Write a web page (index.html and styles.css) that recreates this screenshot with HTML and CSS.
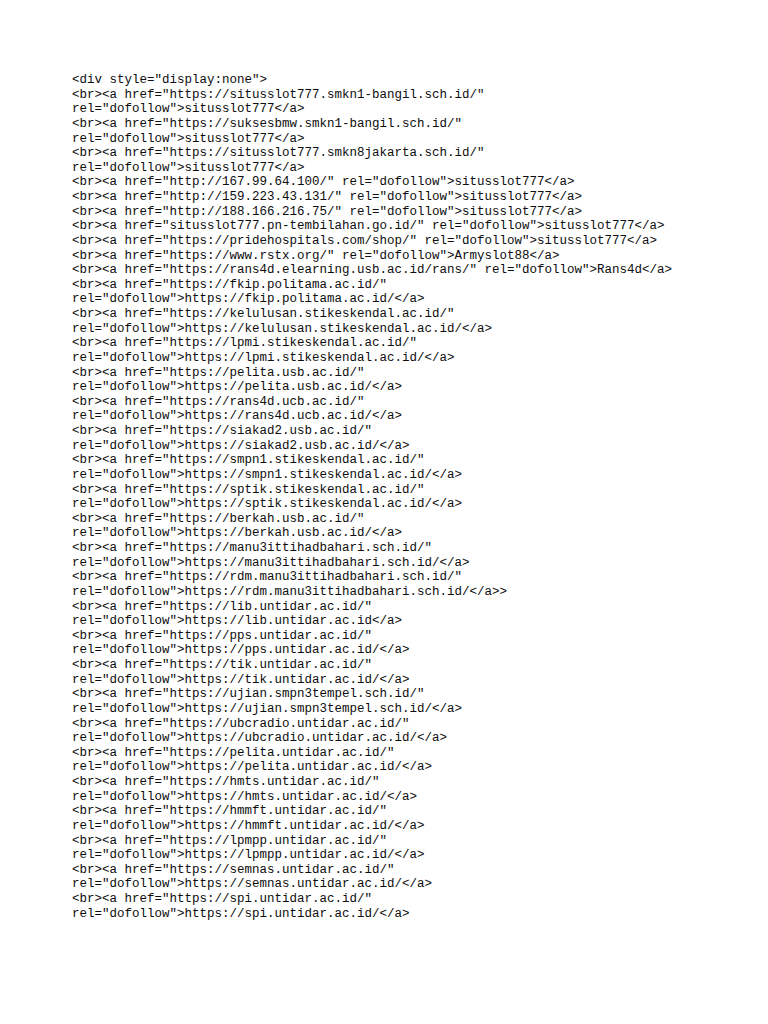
FILE: index.html
```html
<!DOCTYPE html>
<html lang="id">
<head>
<meta charset="utf-8">
<title>Document</title>
<link rel="stylesheet" href="styles.css">
</head>
<body>
<main class="page">
<pre class="source">&lt;div style="display:none"&gt;
&lt;br&gt;&lt;a href="https://situsslot777.smkn1-bangil.sch.id/"
rel="dofollow"&gt;situsslot777&lt;/a&gt;
&lt;br&gt;&lt;a href="https://suksesbmw.smkn1-bangil.sch.id/"
rel="dofollow"&gt;situsslot777&lt;/a&gt;
&lt;br&gt;&lt;a href="https://situsslot777.smkn8jakarta.sch.id/"
rel="dofollow"&gt;situsslot777&lt;/a&gt;
&lt;br&gt;&lt;a href="http://167.99.64.100/" rel="dofollow"&gt;situsslot777&lt;/a&gt;
&lt;br&gt;&lt;a href="http://159.223.43.131/" rel="dofollow"&gt;situsslot777&lt;/a&gt;
&lt;br&gt;&lt;a href="http://188.166.216.75/" rel="dofollow"&gt;situsslot777&lt;/a&gt;
&lt;br&gt;&lt;a href="situsslot777.pn-tembilahan.go.id/" rel="dofollow"&gt;situsslot777&lt;/a&gt;
&lt;br&gt;&lt;a href="https://pridehospitals.com/shop/" rel="dofollow"&gt;situsslot777&lt;/a&gt;
&lt;br&gt;&lt;a href="https://www.rstx.org/" rel="dofollow"&gt;Armyslot88&lt;/a&gt;
&lt;br&gt;&lt;a href="https://rans4d.elearning.usb.ac.id/rans/" rel="dofollow"&gt;Rans4d&lt;/a&gt;
&lt;br&gt;&lt;a href="https://fkip.politama.ac.id/"
rel="dofollow"&gt;https://fkip.politama.ac.id/&lt;/a&gt;
&lt;br&gt;&lt;a href="https://kelulusan.stikeskendal.ac.id/"
rel="dofollow"&gt;https://kelulusan.stikeskendal.ac.id/&lt;/a&gt;
&lt;br&gt;&lt;a href="https://lpmi.stikeskendal.ac.id/"
rel="dofollow"&gt;https://lpmi.stikeskendal.ac.id/&lt;/a&gt;
&lt;br&gt;&lt;a href="https://pelita.usb.ac.id/"
rel="dofollow"&gt;https://pelita.usb.ac.id/&lt;/a&gt;
&lt;br&gt;&lt;a href="https://rans4d.ucb.ac.id/"
rel="dofollow"&gt;https://rans4d.ucb.ac.id/&lt;/a&gt;
&lt;br&gt;&lt;a href="https://siakad2.usb.ac.id/"
rel="dofollow"&gt;https://siakad2.usb.ac.id/&lt;/a&gt;
&lt;br&gt;&lt;a href="https://smpn1.stikeskendal.ac.id/"
rel="dofollow"&gt;https://smpn1.stikeskendal.ac.id/&lt;/a&gt;
&lt;br&gt;&lt;a href="https://sptik.stikeskendal.ac.id/"
rel="dofollow"&gt;https://sptik.stikeskendal.ac.id/&lt;/a&gt;
&lt;br&gt;&lt;a href="https://berkah.usb.ac.id/"
rel="dofollow"&gt;https://berkah.usb.ac.id/&lt;/a&gt;
&lt;br&gt;&lt;a href="https://manu3ittihadbahari.sch.id/"
rel="dofollow"&gt;https://manu3ittihadbahari.sch.id/&lt;/a&gt;
&lt;br&gt;&lt;a href="https://rdm.manu3ittihadbahari.sch.id/"
rel="dofollow"&gt;https://rdm.manu3ittihadbahari.sch.id/&lt;/a&gt;&gt;
&lt;br&gt;&lt;a href="https://lib.untidar.ac.id/"
rel="dofollow"&gt;https://lib.untidar.ac.id&lt;/a&gt;
&lt;br&gt;&lt;a href="https://pps.untidar.ac.id/"
rel="dofollow"&gt;https://pps.untidar.ac.id/&lt;/a&gt;
&lt;br&gt;&lt;a href="https://tik.untidar.ac.id/"
rel="dofollow"&gt;https://tik.untidar.ac.id/&lt;/a&gt;
&lt;br&gt;&lt;a href="https://ujian.smpn3tempel.sch.id/"
rel="dofollow"&gt;https://ujian.smpn3tempel.sch.id/&lt;/a&gt;
&lt;br&gt;&lt;a href="https://ubcradio.untidar.ac.id/"
rel="dofollow"&gt;https://ubcradio.untidar.ac.id/&lt;/a&gt;
&lt;br&gt;&lt;a href="https://pelita.untidar.ac.id/"
rel="dofollow"&gt;https://pelita.untidar.ac.id/&lt;/a&gt;
&lt;br&gt;&lt;a href="https://hmts.untidar.ac.id/"
rel="dofollow"&gt;https://hmts.untidar.ac.id/&lt;/a&gt;
&lt;br&gt;&lt;a href="https://hmmft.untidar.ac.id/"
rel="dofollow"&gt;https://hmmft.untidar.ac.id/&lt;/a&gt;
&lt;br&gt;&lt;a href="https://lpmpp.untidar.ac.id/"
rel="dofollow"&gt;https://lpmpp.untidar.ac.id/&lt;/a&gt;
&lt;br&gt;&lt;a href="https://semnas.untidar.ac.id/"
rel="dofollow"&gt;https://semnas.untidar.ac.id/&lt;/a&gt;
&lt;br&gt;&lt;a href="https://spi.untidar.ac.id/"
rel="dofollow"&gt;https://spi.untidar.ac.id/&lt;/a&gt;</pre>
</main>
</body>
</html>
```

FILE: styles.css
```css
html, body {
  margin: 0;
  padding: 0;
  background: #ffffff;
}

.page {
  padding: 73px 0 0 72px;
}

.source {
  margin: 0;
  font-family: "Liberation Mono", "DejaVu Sans Mono", monospace;
  font-size: 12.5px;
  line-height: 14.63px;
  color: #0d0d0d;
  white-space: pre;
}
```
